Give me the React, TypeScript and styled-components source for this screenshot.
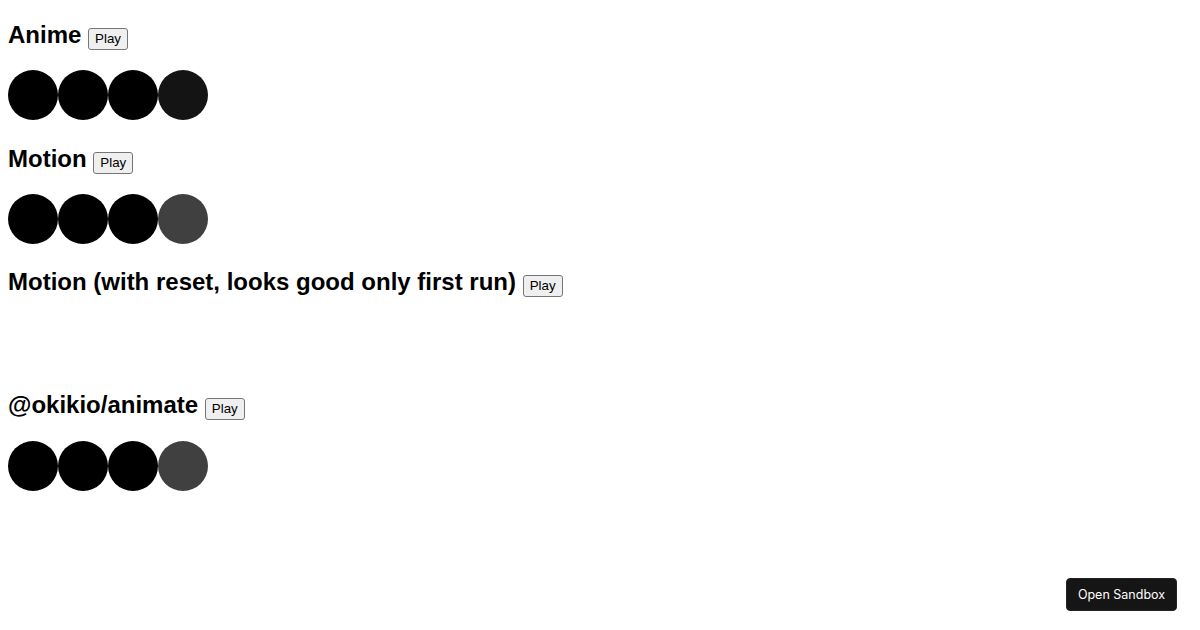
import React from "react";
import styled, { createGlobalStyle } from "styled-components";

const Global = createGlobalStyle`
  html, body { background: #ffffff; }
  body {
    margin: 0;
    padding: 0 8px;
    font-family: "Liberation Serif", serif;
    color: #000000;
  }
`;

const Title = styled.h2`
  font-family: "Liberation Sans", Arial, sans-serif;
  font-size: 24px;
  font-weight: 700;
  line-height: normal;
  margin: 21.2px 0 18.64px;
`;

const PlayButton = styled.button`
  font-family: "Liberation Sans", Arial, sans-serif;
  font-size: 13.333px;
  font-weight: 400;
  color: #000000;
  background: #efefef;
  border: 1px solid #767676;
  border-radius: 3px;
  padding: 2px 6px 3px;
  margin-bottom: -1px;
  line-height: normal;
  vertical-align: baseline;
  cursor: pointer;
`;

const Row = styled.div<{ $hidden?: boolean }>`
  display: flex;
  height: 55.6px;
  padding-top: 2.58px;
  box-sizing: border-box;
  opacity: ${(p) => (p.$hidden ? 0 : 1)};
`;

const Circle = styled.div<{ $color: string }>`
  width: 50px;
  height: 50px;
  border-radius: 50%;
  background: ${(p) => p.$color};
  flex: none;
`;

const SandboxButton = styled.a`
  position: fixed;
  right: 23px;
  bottom: 19px;
  box-sizing: border-box;
  height: 33px;
  width: 111px;
  display: flex;
  align-items: center;
  justify-content: center;
  background: #151515;
  border: 1px solid #242424;
  border-radius: 4px;
  color: #ffffff;
  font-family: Inter, "Liberation Sans", sans-serif;
  font-size: 12.5px;
  font-weight: 400;
  text-decoration: none;
`;

type Section = { title: string; last: string; hidden?: boolean };

const sections: Section[] = [
  { title: "Anime", last: "#141414" },
  { title: "Motion", last: "#404040" },
  { title: "Motion (with reset, looks good only first run)", last: "#404040", hidden: true },
  { title: "@okikio/animate", last: "#404040" },
];

export default function App() {
  return (
    <>
      <Global />
      {sections.map((s) => (
        <React.Fragment key={s.title}>
          <Title>
            {s.title} <PlayButton>Play</PlayButton>
          </Title>
          <Row $hidden={s.hidden}>
            <Circle $color="#000000" />
            <Circle $color="#000000" />
            <Circle $color="#000000" />
            <Circle $color={s.last} />
          </Row>
        </React.Fragment>
      ))}
      <SandboxButton href="#">Open Sandbox</SandboxButton>
    </>
  );
}
